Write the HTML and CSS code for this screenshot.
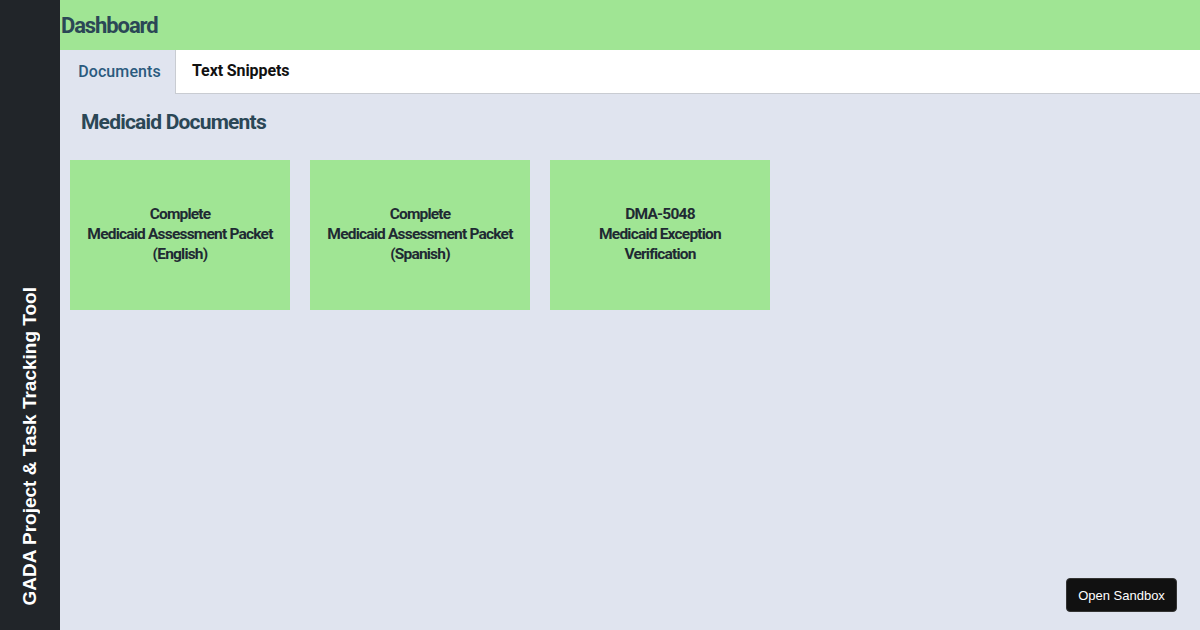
FILE: index.html
```html
<!DOCTYPE html>
<html>
<head>
<meta charset="utf-8">
<link rel="stylesheet" href="styles.css">
</head>
<body>
<div class="app">
  <aside class="sidebar"><span class="side-title">GADA Project &amp; Task Tracking Tool</span></aside>
  <main class="main">
    <header class="topbar"><h1>Dashboard</h1></header>
    <nav class="tabs">
      <div class="tab active">Documents</div>
      <div class="tab">Text Snippets</div>
    </nav>
    <section class="content">
      <h2>Medicaid Documents</h2>
      <div class="cards">
        <div class="card">Complete<br>Medicaid Assessment Packet<br>(English)</div>
        <div class="card">Complete<br>Medicaid Assessment Packet<br>(Spanish)</div>
        <div class="card">DMA-5048<br>Medicaid Exception<br>Verification</div>
      </div>
    </section>
  </main>
</div>
<button class="sandbox">Open Sandbox</button>
</body>
</html>
```
FILE: styles.css
```css
html, body { margin: 0; padding: 0; }
body { width: 1200px; height: 630px; overflow: hidden; background: #e0e4ef; font-family: Roboto, "Liberation Sans", sans-serif; }
.app { display: flex; height: 630px; }
.sidebar { width: 60px; flex: none; background: #212529; display: flex; align-items: flex-end; justify-content: center; padding-bottom: 25px; box-sizing: border-box; }
.side-title { writing-mode: vertical-rl; transform: rotate(180deg); color: #fff; font-family: "Liberation Sans", Arial, sans-serif; font-weight: bold; font-size: 19px; white-space: nowrap; }
.main { flex: 1; display: flex; flex-direction: column; }
.topbar { height: 50px; background: #a0e594; display: flex; align-items: center; }
.topbar h1 { margin: 0 0 0 1px; font-size: 22px; font-weight: 700; color: #2b4756; letter-spacing: -1.1px; }
.tabs { display: flex; height: 44px; background: #fff; border-bottom: 1px solid #c9ccd2; box-sizing: border-box; }
.tab { padding: 0 16px; display: flex; align-items: center; font-size: 16px; font-weight: 700; color: #111; padding-bottom: 2px; letter-spacing: -0.1px; }
.tab.active { background: #e0e4ef; color: #2b5a7e; font-weight: 500; letter-spacing: 0.1px; border-right: 1px solid #c9ccd2; margin-bottom: -1px; width: 116px; box-sizing: border-box; justify-content: center; padding-left: 18px; padding-right: 14px; }
.content { padding: 0 10px; }
.content h2 { margin: 15px 0 25px 11px; font-size: 21px; font-weight: 700; color: #2b4756; letter-spacing: -0.8px; line-height: 26px; }
.cards { display: flex; gap: 20px; }
.card { width: 220px; height: 150px; box-sizing: border-box; padding-bottom: 2px; background: #a0e594; display: flex; align-items: center; justify-content: center; text-align: center; font-size: 15.5px; font-weight: 700; line-height: 20px; color: #1f2a33; letter-spacing: -0.8px; }
.sandbox { position: fixed; left: 1066px; top: 578px; width: 111px; height: 34px; background: #111; color: #fff; border: 1px solid #333; border-radius: 4px; font-family: "Liberation Sans", Arial, sans-serif; font-size: 13px; padding: 0; }
```
